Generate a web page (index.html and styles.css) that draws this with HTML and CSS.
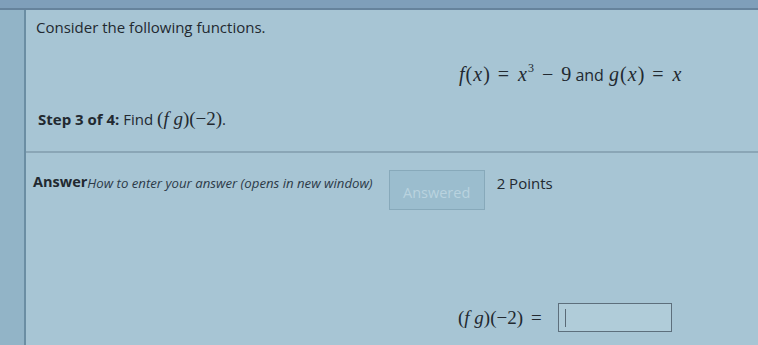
FILE: index.html
```html
<!DOCTYPE html>
<html>
<head>
<meta charset="utf-8">
<link rel="stylesheet" href="styles.css">
</head>
<body>
<div class="topbar"></div>
<div class="layout">
  <div class="sidebar"></div>
  <main class="panel">
    <section class="question">
      <p class="intro">Consider the following functions.</p>
      <div class="formula"><span class="math"><i class="fn">f</i>(<i>x</i>)<span class="op">=</span><i>x</i><sup>3</sup><span class="op">−</span>9</span> and <span class="math"><i class="fn">g</i>(<i>x</i>)<span class="op">=</span><i>x</i></span></div>
      <p class="step"><b>Step 3 of 4:</b> Find <span class="math">(<i>f g</i>)(−2)</span>.</p>
    </section>
    <section class="answer">
      <div class="answer-head">
        <span class="answer-label">Answer</span><a class="help">How to enter your answer (opens in new window)</a>
        <span class="btn">Answered</span>
        <span class="points">2 Points</span>
      </div>
      <div class="entry">
        <span class="math">(<i>f g</i>)(−2)<span class="op">=</span></span>
        <span class="input"><span class="caret"></span></span>
      </div>
    </section>
  </main>
</div>
</body>
</html>
```
FILE: styles.css
```css
html, body {
  margin: 0;
  padding: 0;
  background: #a7c5d4;
  color: #222930;
  font-family: "Open Sans", "Noto Sans", sans-serif;
}
.topbar {
  height: 8px;
  background: #7f9fba;
  border-bottom: 2px solid #66839c;
}
.layout {
  display: flex;
  height: 335px;
}
.sidebar {
  width: 24px;
  background: #92b4c7;
  border-right: 2px solid #6b8ea3;
  flex: none;
}
.panel {
  flex: 1;
  display: flex;
  flex-direction: column;
}
.question {
  height: 143px;
  border-bottom: 2px solid #8aa6b6;
  padding: 0 0 0 10px;
  box-sizing: border-box;
}
.intro {
  margin: 7px 0 0 0;
  font-size: 15px;
}
.formula {
  margin: 26px 0 0 0;
  padding-left: 422px;
  font-size: 16px;
}
.math {
  font-family: "Liberation Serif", "DejaVu Serif", serif;
  font-size: 20px;
}
.formula .math i {
  margin: 0 1px;
}
.op {
  margin: 0 8px;
}
.math sup {
  font-size: 12px;
  vertical-align: 9px;
  line-height: 0;
}
.step {
  margin: 22px 0 0 2px;
  font-size: 15px;
}
.step .math {
  font-size: 19px;
}
.step b {
  font-weight: 700;
}
.answer {
  flex: 1;
  padding: 17px 0 0 7px;
}
.answer-head {
  display: flex;
  align-items: flex-start;
}
.answer-label {
  font-weight: 700;
  font-size: 14.5px;
  margin-top: 2px;
}
.help {
  font-style: italic;
  font-size: 13.2px;
  margin-top: 4px;
  color: #2c3a48;
}
.btn {
  margin-left: 16px;
  width: 96px;
  height: 40px;
  box-sizing: border-box;
  background: #9bbdce;
  border: 1px solid #87a9ba;
  color: #b9d3df;
  font-size: 14.5px;
  display: flex;
  align-items: center;
  justify-content: center;
  padding-top: 4px;
}
.points {
  margin-left: 12px;
  font-size: 15px;
  margin-top: 3px;
}
.entry {
  display: flex;
  align-items: center;
  margin: 93px 0 0 425px;
}
.entry .math {
  font-size: 19px;
}
.input {
  margin-left: 8px;
  width: 114px;
  height: 29px;
  box-sizing: border-box;
  border: 1px solid #5d6f7c;
  background: #b0ccd9;
  display: flex;
  align-items: center;
  padding-left: 6px;
}
.caret {
  width: 1px;
  height: 18px;
  background: #5a6a76;
}
```
